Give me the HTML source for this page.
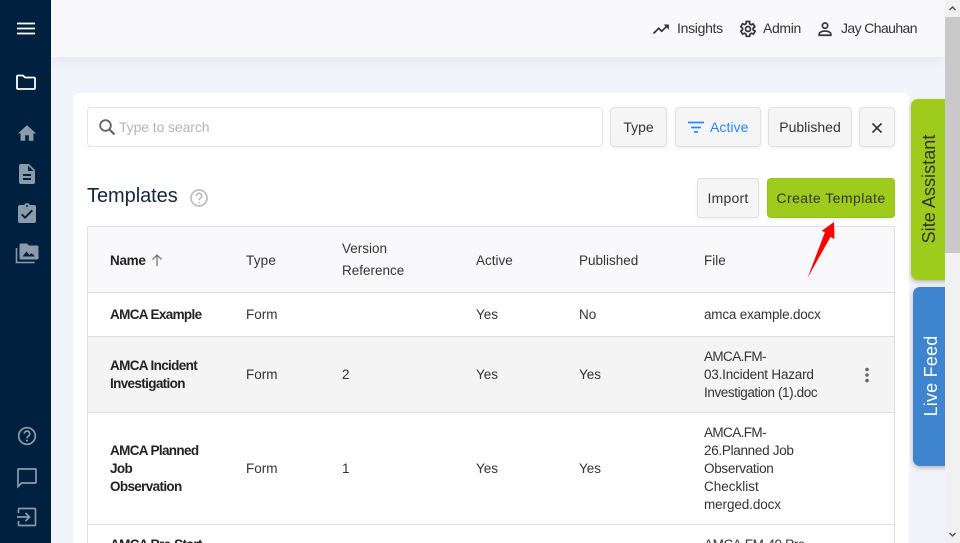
<!DOCTYPE html>
<html><head><meta charset="utf-8"><style>
html,body{margin:0;padding:0;width:960px;height:543px;overflow:hidden;background:#f3f4fb}
body{position:relative;font-family:"Liberation Sans",sans-serif;font-size:13.5px;color:#222}
.a{position:absolute}
.t{position:absolute;white-space:nowrap;line-height:18px;color:#333}
.b{font-weight:bold;color:#222;letter-spacing:-.65px}
.btn{position:absolute;top:107px;height:38px;background:#f5f5f5;border:1px solid #e0e0e0;border-radius:4px;box-shadow:0 2px 5px rgba(0,0,0,.06);line-height:38px;text-align:center;font-size:14px;color:#333}
svg{position:absolute;display:block}
.line{position:absolute;left:87px;width:808px;height:1px;background:#e0e0e0}
#tx{position:absolute;left:0;top:1px;width:960px;height:543px}
</style></head><body>
<div class="a" style="left:51px;top:0;width:894px;height:57px;background:#f9f9fd;box-shadow:0 3px 14px rgba(40,50,90,.08)"></div>
<div class="a" style="left:73px;top:93px;width:836px;height:450px;background:#fff;border-radius:5px 5px 0 0"></div>

<div class="a" style="left:0;top:0;width:51px;height:543px;background:#00203f"></div>
<svg style="left:15px;top:20px" width="22" height="18" viewBox="0 0 22 18"><path d="M2 3.500H20M2 8.500H20M2 13.500H20" stroke="#fff" stroke-width="1.700"/></svg>
<svg style="left:14px;top:72px" width="24" height="20" viewBox="0 0 24 20"><path d="M3 4.500a1 1 0 0 1 1-1h5l2 2h9a1 1 0 0 1 1 1V16a1 1 0 0 1-1 1H4a1 1 0 0 1-1-1Z" fill="none" stroke="#fff" stroke-width="1.800"/></svg>
<svg style="left:16px;top:122px" width="22" height="22" viewBox="0 0 24 24"><path d="M10 20.500v-6h4v6h5v-8h3L12 3.500 2 12.500h3v8Z" fill="#8c9bab"/></svg>
<svg style="left:15px;top:162px" width="24" height="24" viewBox="0 0 24 24"><path d="M14 2H6a2 2 0 0 0-2 2v16a2 2 0 0 0 2 2h12a2 2 0 0 0 2-2V8Zm2 16H8v-2h8Zm0-4H8v-2h8Zm-3-5V3.500L18.500 9Z" fill="#8c9bab"/></svg>
<svg style="left:15px;top:202px" width="24" height="24" viewBox="0 0 24 24"><path d="M19 3h-4.200a3 3 0 0 0-5.600 0H5a2 2 0 0 0-2 2v14a2 2 0 0 0 2 2h14a2 2 0 0 0 2-2V5a2 2 0 0 0-2-2Zm-7 0a1 1 0 1 1 0 2 1 1 0 0 1 0-2Zm-2 14-4-4 1.400-1.400L10 14.200l6.600-6.600L18 9Z" fill="#8c9bab"/></svg>
<svg style="left:15px;top:242px" width="24" height="24" viewBox="0 0 24 24"><path d="M1.500 6v14.500h18" fill="none" stroke="#8c9bab" stroke-width="1.600"/><path d="M22 3.500h-8l-2-2H6a1.500 1.500 0 0 0-1.500 1.500v13A1.500 1.500 0 0 0 6 17.500h16a1.500 1.500 0 0 0 1.500-1.500V5A1.500 1.500 0 0 0 22 3.500Z" fill="#8c9bab"/><path d="M7.500 14.500l4-5 3 3.500 2-2 3.500 3.500Z" fill="#00203f"/></svg>
<svg style="left:15px;top:424px" width="24" height="24" viewBox="0 0 24 24" fill="none" stroke="#8c9bab"><circle cx="12" cy="12" r="8.300" stroke-width="1.700"/><path d="M9.300 9.700a2.700 2.700 0 1 1 4.300 2.200c-1 .7-1.600 1.200-1.600 2.500" stroke-width="1.700"/><circle cx="12" cy="16.600" r="1" fill="#8c9bab" stroke="none"/></svg>
<svg style="left:15px;top:465px" width="24" height="24" viewBox="0 0 24 24"><path d="M3.500 4h17a.5.500 0 0 1 .5.500v13a.5.500 0 0 1-.5.500H6.500L3 21.500V4.500a.5.500 0 0 1 .5-.500Z" fill="none" stroke="#8c9bab" stroke-width="1.700"/></svg>
<svg style="left:15px;top:505px" width="24" height="24" viewBox="0 0 24 24" fill="none" stroke="#8c9bab" stroke-width="1.700"><path d="M3.500 8V4.500a1 1 0 0 1 1-1h15a1 1 0 0 1 1 1v15a1 1 0 0 1-1 1h-15a1 1 0 0 1-1-1V16"/><path d="M2 12h12M10.500 8l4 4-4 4"/></svg>

<svg style="left:652px;top:20px" width="18" height="18" viewBox="0 0 24 24"><path d="M2 18l7-7 4 4 8-8" fill="none" stroke="#333" stroke-width="2.200"/><path d="M15.500 6H22.500V13Z" fill="#333"/></svg>
<span class="t" style="left:677px;top:19px;font-size:14px;letter-spacing:-.3px">Insights</span>
<svg style="left:738px;top:19px" width="20" height="20" viewBox="0 0 24 24"><path d="M19.400 13c.1-.3.1-.7.100-1s0-.7-.1-1l2.100-1.600-2-3.500-2.500 1a8 8 0 0 0-1.700-1L15.300 3h-4l-.4 2.700a8 8 0 0 0-1.700 1l-2.500-1-2 3.500L6.800 11a8 8 0 0 0 0 2l-2.100 1.600 2 3.500 2.500-1c.5.400 1.100.7 1.700 1l.4 2.700h4l.4-2.700c.6-.3 1.200-.6 1.700-1l2.500 1 2-3.500Z" transform="translate(-1.300 0)" fill="none" stroke="#333" stroke-width="2"/><circle cx="12" cy="12" r="3" fill="none" stroke="#333" stroke-width="2"/></svg>
<span class="t" style="left:763px;top:19px;font-size:14px;letter-spacing:-.35px">Admin</span>
<svg style="left:815px;top:19px" width="20" height="20" viewBox="0 0 24 24" fill="none" stroke="#333" stroke-width="2"><circle cx="12" cy="8" r="3.200"/><path d="M5 19.500v-1.500c0-2.500 4.500-3.500 7-3.500s7 1 7 3.500v1.500Z"/></svg>
<span class="t" style="left:841px;top:19px;font-size:14px;letter-spacing:-.6px">Jay Chauhan</span>

<div class="a" style="left:87px;top:107px;width:514px;height:38px;border:1px solid #e4e4e4;border-radius:4px;background:#fff"></div>
<svg style="left:97px;top:117px" width="20" height="20" viewBox="0 0 20 20" fill="none" stroke="#666" stroke-width="1.900"><circle cx="8.500" cy="8.500" r="5.300"/><path d="M12.500 12.500l5 5" stroke-width="2.200"/></svg>
<span class="t" style="left:119px;top:118px;font-size:14px;color:#b5b5b5;letter-spacing:-.1px">Type to search</span>

<div class="btn" style="left:610px;width:55px">Type</div>
<div class="btn" style="left:675px;width:84px"></div>
<svg style="left:687px;top:119px" width="18" height="16" viewBox="0 0 18 16"><path d="M1 3.500H17M4 8.500H14M7 13H11" stroke="#2b85ff" stroke-width="1.800"/></svg>
<span class="t" style="left:710px;top:118px;font-size:14px;color:#2b85ff;letter-spacing:.05px">Active</span>
<div class="btn" style="left:768px;width:82px">Published</div>
<div class="btn" style="left:859px;width:34px"></div>
<svg style="left:870px;top:121px" width="14" height="14" viewBox="0 0 14 14"><path d="M2.500 2.500L11.500 11.500M11.500 2.500L2.500 11.500" stroke="#333" stroke-width="1.600"/></svg>

<span class="t" style="left:87px;top:184px;font-size:20px;line-height:24px;color:#14263c;letter-spacing:-.05px">Templates</span>
<svg style="left:189px;top:188px" width="20" height="20" viewBox="0 0 20 20" fill="none" stroke="#bdbdbd" stroke-width="1.700"><circle cx="10" cy="10" r="8"/><path d="M7.500 8a2.600 2.600 0 1 1 4 2.100c-1 .7-1.500 1.100-1.500 2.300"/><circle cx="10" cy="14.700" r=".8" fill="#bdbdbd" stroke="none"/></svg>
<div class="btn" style="left:697px;top:178px;width:60px;letter-spacing:.2px">Import</div>
<div class="btn" style="left:767px;top:178px;width:126px;background:#9fcb1c;border-color:#97c01a;color:#333;letter-spacing:.45px">Create Template</div>

<div class="a" style="left:87px;top:226px;width:806px;height:66px;background:#f9f9fc;border:1px solid #e0e0e0;border-bottom:0"></div>
<div class="a" style="left:87px;top:292px;width:1px;height:251px;background:#e0e0e0"></div>
<div class="a" style="left:894px;top:292px;width:1px;height:251px;background:#e0e0e0"></div>
<div class="a" style="left:88px;top:337px;width:806px;height:75px;background:#f4f4f4"></div>
<div class="line" style="top:292px"></div><div class="line" style="top:336px"></div><div class="line" style="top:412px"></div><div class="line" style="top:524px"></div>

<div id="tx">
<span class="t b" style="left:110px;top:251px;letter-spacing:-.3px">Name</span>
<span class="t" style="left:246px;top:251px;letter-spacing:.2px">Type</span>
<span class="t" style="left:342px;top:239px">Version</span>
<span class="t" style="left:342px;top:261px">Reference</span>
<span class="t" style="left:476px;top:251px">Active</span>
<span class="t" style="left:579px;top:251px">Published</span>
<span class="t" style="left:704px;top:251px">File</span>

<span class="t b" style="left:110px;top:305px">AMCA Example</span>
<span class="t" style="left:246px;top:305px">Form</span>
<span class="t" style="left:476px;top:305px">Yes</span>
<span class="t" style="left:579px;top:305px">No</span>
<span class="t" style="left:704px;top:305px;letter-spacing:-.2px">amca example.docx</span>

<span class="t b" style="left:110px;top:356px">AMCA Incident</span>
<span class="t b" style="left:110px;top:374px">Investigation</span>
<span class="t" style="left:246px;top:365px">Form</span>
<span class="t" style="left:342px;top:365px">2</span>
<span class="t" style="left:476px;top:365px">Yes</span>
<span class="t" style="left:579px;top:365px">Yes</span>
<span class="t" style="left:704px;top:347px;letter-spacing:-.6px">AMCA.FM-</span>
<span class="t" style="left:704px;top:365px;letter-spacing:-.2px">03.Incident Hazard</span>
<span class="t" style="left:704px;top:383px;letter-spacing:-.4px">Investigation (1).doc</span>

<span class="t b" style="left:110px;top:441px">AMCA Planned</span>
<span class="t b" style="left:110px;top:459px">Job</span>
<span class="t b" style="left:110px;top:477px">Observation</span>
<span class="t" style="left:246px;top:459px">Form</span>
<span class="t" style="left:342px;top:459px">1</span>
<span class="t" style="left:476px;top:459px">Yes</span>
<span class="t" style="left:579px;top:459px">Yes</span>
<span class="t" style="left:704px;top:423px;letter-spacing:-.6px">AMCA.FM-</span>
<span class="t" style="left:704px;top:441px;letter-spacing:-.3px">26.Planned Job</span>
<span class="t" style="left:704px;top:459px;letter-spacing:-.3px">Observation</span>
<span class="t" style="left:704px;top:477px">Checklist</span>
<span class="t" style="left:704px;top:495px;letter-spacing:-.1px">merged.docx</span>

<span class="t b" style="left:110px;top:535px">AMCA Pre-Start</span>
<span class="t" style="left:704px;top:535px;letter-spacing:-.4px">AMCA.FM-49.Pre-</span>
</div>
<svg style="left:150px;top:253px" width="14" height="14" viewBox="0 0 14 14"><path d="M7 13V2M2.500 6.500L7 2l4.500 4.500" fill="none" stroke="#777" stroke-width="1.300"/></svg>
<svg style="left:863px;top:367px" width="8" height="16" viewBox="0 0 8 16" fill="#666"><circle cx="4" cy="2.500" r="1.800"/><circle cx="4" cy="8" r="1.800"/><circle cx="4" cy="13.500" r="1.800"/></svg>

<svg style="left:800px;top:218px" width="40" height="62" viewBox="0 0 40 62"><path d="M7.500 60L25 14l-3.500-1L34 4l.5 17-4-2Z" fill="#f00"/></svg>

<div class="a" style="left:911px;top:99px;width:40px;height:181px;background:#9fcb1c;border-radius:7px 0 0 7px;box-shadow:0 2px 5px rgba(0,0,0,.25)"></div>
<span class="t" style="left:929px;top:189px;font-size:18px;line-height:18px;color:#333;transform:translate(-50%,-50%) rotate(-90deg);letter-spacing:.05px">Site Assistant</span>
<div class="a" style="left:913px;top:287px;width:38px;height:179px;background:#3f84cf;border-radius:7px 0 0 7px;box-shadow:0 2px 5px rgba(0,0,0,.25)"></div>
<span class="t" style="left:931px;top:376px;font-size:18px;line-height:18px;color:#fff;transform:translate(-50%,-50%) rotate(-90deg);letter-spacing:.2px">Live Feed</span>

<div class="a" style="left:945px;top:0;width:15px;height:543px;background:#f1f1f1"></div>
<div class="a" style="left:945px;top:17px;width:15px;height:236px;background:#c9c9c9"></div>
<svg style="left:945px;top:0" width="15" height="17" viewBox="0 0 15 17"><path d="M4.500 10L7.500 7l3 3" fill="none" stroke="#555" stroke-width="1.500"/></svg>
<svg style="left:945px;top:526px" width="15" height="17" viewBox="0 0 15 17"><path d="M4.500 7L7.500 10l3-3" fill="none" stroke="#555" stroke-width="1.500"/></svg>
</body></html>
